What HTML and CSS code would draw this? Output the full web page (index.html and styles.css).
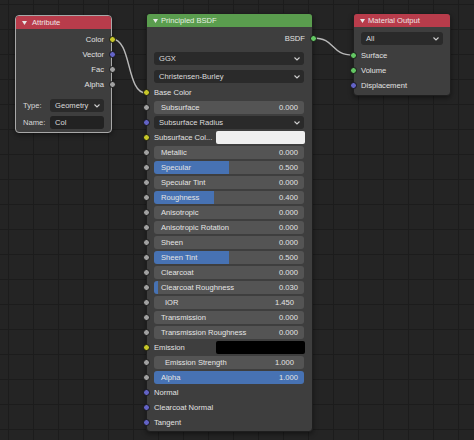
FILE: index.html
```html
<!DOCTYPE html>
<html>
<head>
<meta charset="utf-8">
<link rel="stylesheet" href="styles.css">
</head>
<body>
<div class="canvas">
  <svg class="links" width="474" height="440" viewBox="0 0 474 440">
    <path d="M112,39 C132,39 126,93 146,93" />
    <path d="M313,38 C336,38 330,55 353,55" />
  </svg>

  <div class="node n-attr">
    <div class="head red"><svg class="tri" width="5" height="4" viewBox="0 0 5 4"><path d="M0,0 L5,0 L2.5,4 Z"/></svg><span>Attribute</span></div>
    <div class="body pad-attr">
      <div class="row out"><span>Color</span><i class="sock s-out yellow"></i></div>
      <div class="row out"><span>Vector</span><i class="sock s-out blue"></i></div>
      <div class="row out"><span>Fac</span><i class="sock s-out gray"></i></div>
      <div class="row out"><span>Alpha</span><i class="sock s-out gray"></i></div>
      <div class="sp6"></div>
      <div class="row prop"><span class="plabel">Type:</span><div class="drop small"><span>Geometry</span><svg class="chev" width="6" height="4" viewBox="0 0 6 4"><path d="M0.5,0.5 L3,3 L5.5,0.5"/></svg></div></div>
      <div class="sp2"></div>
      <div class="row prop"><span class="plabel">Name:</span><div class="text small"><span>Col</span></div></div>
    </div>
  </div>

  <div class="node n-bsdf">
    <div class="head green"><svg class="tri" width="5" height="4" viewBox="0 0 5 4"><path d="M0,0 L5,0 L2.5,4 Z"/></svg><span>Principled BSDF</span></div>
    <div class="body pad-bsdf">
      <div class="row out"><span>BSDF</span><i class="sock s-out green-s"></i></div>
      <div class="sp5"></div>
      <div class="row"><div class="drop wide"><span>GGX</span><svg class="chev" width="6" height="4" viewBox="0 0 6 4"><path d="M0.5,0.5 L3,3 L5.5,0.5"/></svg></div></div>
      <div class="sp3"></div>
      <div class="row"><div class="drop wide"><span>Christensen-Burley</span><svg class="chev" width="6" height="4" viewBox="0 0 6 4"><path d="M0.5,0.5 L3,3 L5.5,0.5"/></svg></div></div>
      <div class="sp1"></div>
      <div class="row in"><i class="sock s-in yellow"></i><span class="lab">Base Color</span></div>
      <div class="row in"><i class="sock s-in gray"></i><div class="field" style="--v:0%"><span>Subsurface</span><span>0.000</span></div></div>
      <div class="row in"><i class="sock s-in blue"></i><div class="drop wide"><span>Subsurface Radius</span><svg class="chev" width="6" height="4" viewBox="0 0 6 4"><path d="M0.5,0.5 L3,3 L5.5,0.5"/></svg></div></div>
      <div class="row in"><i class="sock s-in yellow"></i><span class="lab">Subsurface Col...</span><div class="swatch white"></div></div>
      <div class="row in"><i class="sock s-in gray"></i><div class="field" style="--v:0%"><span>Metallic</span><span>0.000</span></div></div>
      <div class="row in"><i class="sock s-in gray"></i><div class="field" style="--v:50%"><span>Specular</span><span>0.500</span></div></div>
      <div class="row in"><i class="sock s-in gray"></i><div class="field" style="--v:0%"><span>Specular Tint</span><span>0.000</span></div></div>
      <div class="row in"><i class="sock s-in gray"></i><div class="field" style="--v:40%"><span>Roughness</span><span>0.400</span></div></div>
      <div class="row in"><i class="sock s-in gray"></i><div class="field" style="--v:0%"><span>Anisotropic</span><span>0.000</span></div></div>
      <div class="row in"><i class="sock s-in gray"></i><div class="field" style="--v:0%"><span>Anisotropic Rotation</span><span>0.000</span></div></div>
      <div class="row in"><i class="sock s-in gray"></i><div class="field" style="--v:0%"><span>Sheen</span><span>0.000</span></div></div>
      <div class="row in"><i class="sock s-in gray"></i><div class="field" style="--v:50%"><span>Sheen Tint</span><span>0.500</span></div></div>
      <div class="row in"><i class="sock s-in gray"></i><div class="field" style="--v:0%"><span>Clearcoat</span><span>0.000</span></div></div>
      <div class="row in"><i class="sock s-in gray"></i><div class="field" style="--v:3%"><span>Clearcoat Roughness</span><span>0.030</span></div></div>
      <div class="row in"><i class="sock s-in gray"></i><div class="field num"><span>IOR</span><span>1.450</span></div></div>
      <div class="row in"><i class="sock s-in gray"></i><div class="field" style="--v:0%"><span>Transmission</span><span>0.000</span></div></div>
      <div class="row in"><i class="sock s-in gray"></i><div class="field" style="--v:0%"><span>Transmission Roughness</span><span>0.000</span></div></div>
      <div class="row in"><i class="sock s-in yellow"></i><span class="lab">Emission</span><div class="swatch black"></div></div>
      <div class="row in"><i class="sock s-in gray"></i><div class="field num"><span>Emission Strength</span><span>1.000</span></div></div>
      <div class="row in"><i class="sock s-in gray"></i><div class="field full" style="--v:100%"><span>Alpha</span><span>1.000</span></div></div>
      <div class="row in"><i class="sock s-in blue"></i><span class="lab">Normal</span></div>
      <div class="row in"><i class="sock s-in blue"></i><span class="lab">Clearcoat Normal</span></div>
      <div class="row in"><i class="sock s-in blue"></i><span class="lab">Tangent</span></div>
    </div>
  </div>

  <div class="node n-out">
    <div class="head red"><svg class="tri" width="5" height="4" viewBox="0 0 5 4"><path d="M0,0 L5,0 L2.5,4 Z"/></svg><span>Material Output</span></div>
    <div class="body pad-out">
      <div class="row"><div class="drop wide"><span>All</span><svg class="chev" width="6" height="4" viewBox="0 0 6 4"><path d="M0.5,0.5 L3,3 L5.5,0.5"/></svg></div></div>
      <div class="sp2"></div>
      <div class="row in"><i class="sock s-in green-s"></i><span class="lab">Surface</span></div>
      <div class="row in"><i class="sock s-in green-s"></i><span class="lab">Volume</span></div>
      <div class="row in"><i class="sock s-in blue"></i><span class="lab">Displacement</span></div>
    </div>
  </div>
</div>
</body>
</html>
```

FILE: styles.css
```css
* { box-sizing: border-box; }
html, body {
  margin: 0;
  padding: 0;
}
body {
  width: 474px;
  height: 440px;
  overflow: hidden;
  background-color: #242424;
  background-image:
    linear-gradient(to right, #1c1c1c 1px, transparent 1px),
    linear-gradient(to bottom, #1c1c1c 1px, transparent 1px);
  background-size: 25px 25px;
  background-position: 8px 4px;
  font-family: "Liberation Sans", Arial, sans-serif;
  font-size: 7.6px;
  color: #e2e2e2;
}
.canvas {
  position: relative;
  width: 474px;
  height: 440px;
}
.links {
  position: absolute;
  left: 0;
  top: 0;
}
.links path {
  fill: none;
  stroke: #b8b8b8;
  stroke-width: 1.4;
}
.node {
  position: absolute;
  background: #3e3e3e;
  border: 1px solid #1e1e1e;
  border-radius: 4px;
  box-shadow: 0 2px 5px rgba(0, 0, 0, 0.45);
}
.n-attr { left: 15px; top: 15px; width: 97px; border-color: #a8a8a8; }
.n-bsdf { left: 146px; top: 13px; width: 167px; }
.n-out  { left: 353px; top: 13px; width: 98px; }

.head {
  height: 13px;
  display: flex;
  align-items: center;
  padding-left: 6px;
  border-radius: 3px 3px 0 0;
  color: #efe6e6;
}
.head .tri { margin-right: 3px; fill: #e8e8e8; }
.head.red { background: #b83c4b; }
.head.green { background: #5a9d4e; color: #e6f0e2; }
.n-attr .head { padding-left: 6px; }
.n-attr .head .tri { margin-right: 5px; }

.body { display: flex; flex-direction: column; }
.pad-attr { padding: 3px 0 2px; }
.pad-bsdf { padding: 4px 0 1px; }
.pad-out  { padding: 4px 0 2px; }
.sp1 { height: 1px; }
.sp2 { height: 2px; }
.sp3 { height: 3px; }
.sp5 { height: 5px; }
.sp6 { height: 6px; }

.row {
  position: relative;
  height: 15px;
  display: flex;
  align-items: center;
  padding: 0 8px 0 7px;
  white-space: nowrap;
}
.row.out { justify-content: flex-end; padding-right: 7px; }
.n-out .row { padding-left: 7px; padding-right: 7px; }

.sock {
  position: absolute;
  top: 4px;
  width: 7px;
  height: 7px;
  border-radius: 50%;
  border: 1px solid #151515;
}
.s-out { right: -4.5px; }
.s-in { left: -4.5px; }
.yellow { background: #c7c729; }
.gray { background: #a1a1a1; }
.blue { background: #6363c7; }
.green-s { background: #63c763; }

.lab { flex: 1; }

.field {
  flex: 1;
  height: 13px;
  border-radius: 3px;
  display: flex;
  align-items: center;
  justify-content: space-between;
  padding: 0 6px 0 7px;
  background: linear-gradient(to right, #4772b3 var(--v), #545454 var(--v));
  color: #e4e4e4;
}
.field.num {
  background: #545454;
  padding: 0 10px 0 11px;
}
.drop {
  height: 13px;
  border-radius: 3px;
  display: flex;
  align-items: center;
  justify-content: space-between;
  background: #2a2a2a;
  padding: 0 4px 0 5px;
  color: #dcdcdc;
}
.drop.wide { flex: 1; }
.chev { fill: none; stroke: #cfcfcf; stroke-width: 1.1; }
.swatch {
  width: 89px;
  height: 13px;
  border-radius: 2px;
  margin-right: -1px;
}
.swatch.white { background: #efefef; }
.swatch.black { background: #000; }

.row.prop { padding-left: 7px; padding-right: 7px; }
.plabel { flex: 1; color: #d8d8d8; }
.drop.small, .text.small { width: 54px; }
.text {
  height: 13px;
  border-radius: 3px;
  display: flex;
  align-items: center;
  background: #222222;
  padding: 0 5px;
  color: #dcdcdc;
}
```
